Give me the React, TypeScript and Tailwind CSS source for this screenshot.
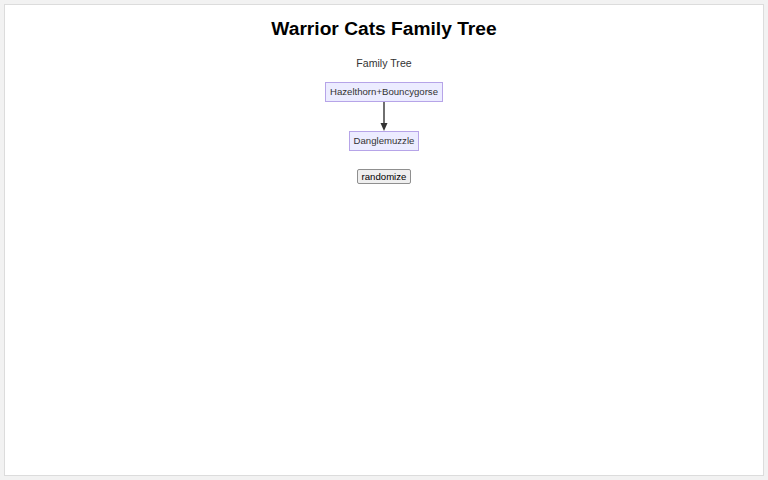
import React, { useState } from 'react';

const cats = ['Danglemuzzle', 'Hazelthorn', 'Bouncygorse', 'Mossfur', 'Leafpelt', 'Stormtail'];

const Node: React.FC<{ label: string }> = ({ label }) => (
    <div className="border border-[#b6a4e8] bg-[#ececff] px-[4px] h-[20px] flex items-center text-[9.6px] text-[#333] leading-none">
        {label}
    </div>
);

const App: React.FC = () => {
    const [pair, setPair] = useState({ parents: 'Hazelthorn+Bouncygorse', kit: 'Danglemuzzle' });

    const randomize = () => {
        const pick = () => cats[Math.floor(Math.random() * cats.length)];
        setPair({ parents: `${pick()}+${pick()}`, kit: pick() });
    };

    return (
        <div className="w-[768px] h-[480px] bg-[#f2f2f2] p-[4px] font-['Liberation_Sans',Arial,sans-serif]">
            <div className="h-full bg-white border border-[#dcdcdc] flex flex-col items-center">
                <h1 className="mt-[13px] text-[19.2px] font-bold text-black leading-[22px]">Warrior Cats Family Tree</h1>
                <p className="mt-[17px] text-[10.6px] text-[#333] leading-[12px]">Family Tree</p>
                <div className="mt-[13px] flex flex-col items-center">
                    <Node label={pair.parents} />
                    <svg width="10" height="29" viewBox="0 0 10 29" className="block">
                        <line x1="5" y1="0" x2="5" y2="22" stroke="#333" strokeWidth="1.4" />
                        <path d="M1.5 21 L8.5 21 L5 29 Z" fill="#333" />
                    </svg>
                    <Node label={pair.kit} />
                </div>
                <button
                    onClick={randomize}
                    className="mt-[18px] h-[15px] px-[4px] text-[9.6px] leading-none text-black bg-[#efefef] border border-[#8f8f8f] rounded-[2px]"
                >
                    randomize
                </button>
            </div>
        </div>
    );
};

export default App;
